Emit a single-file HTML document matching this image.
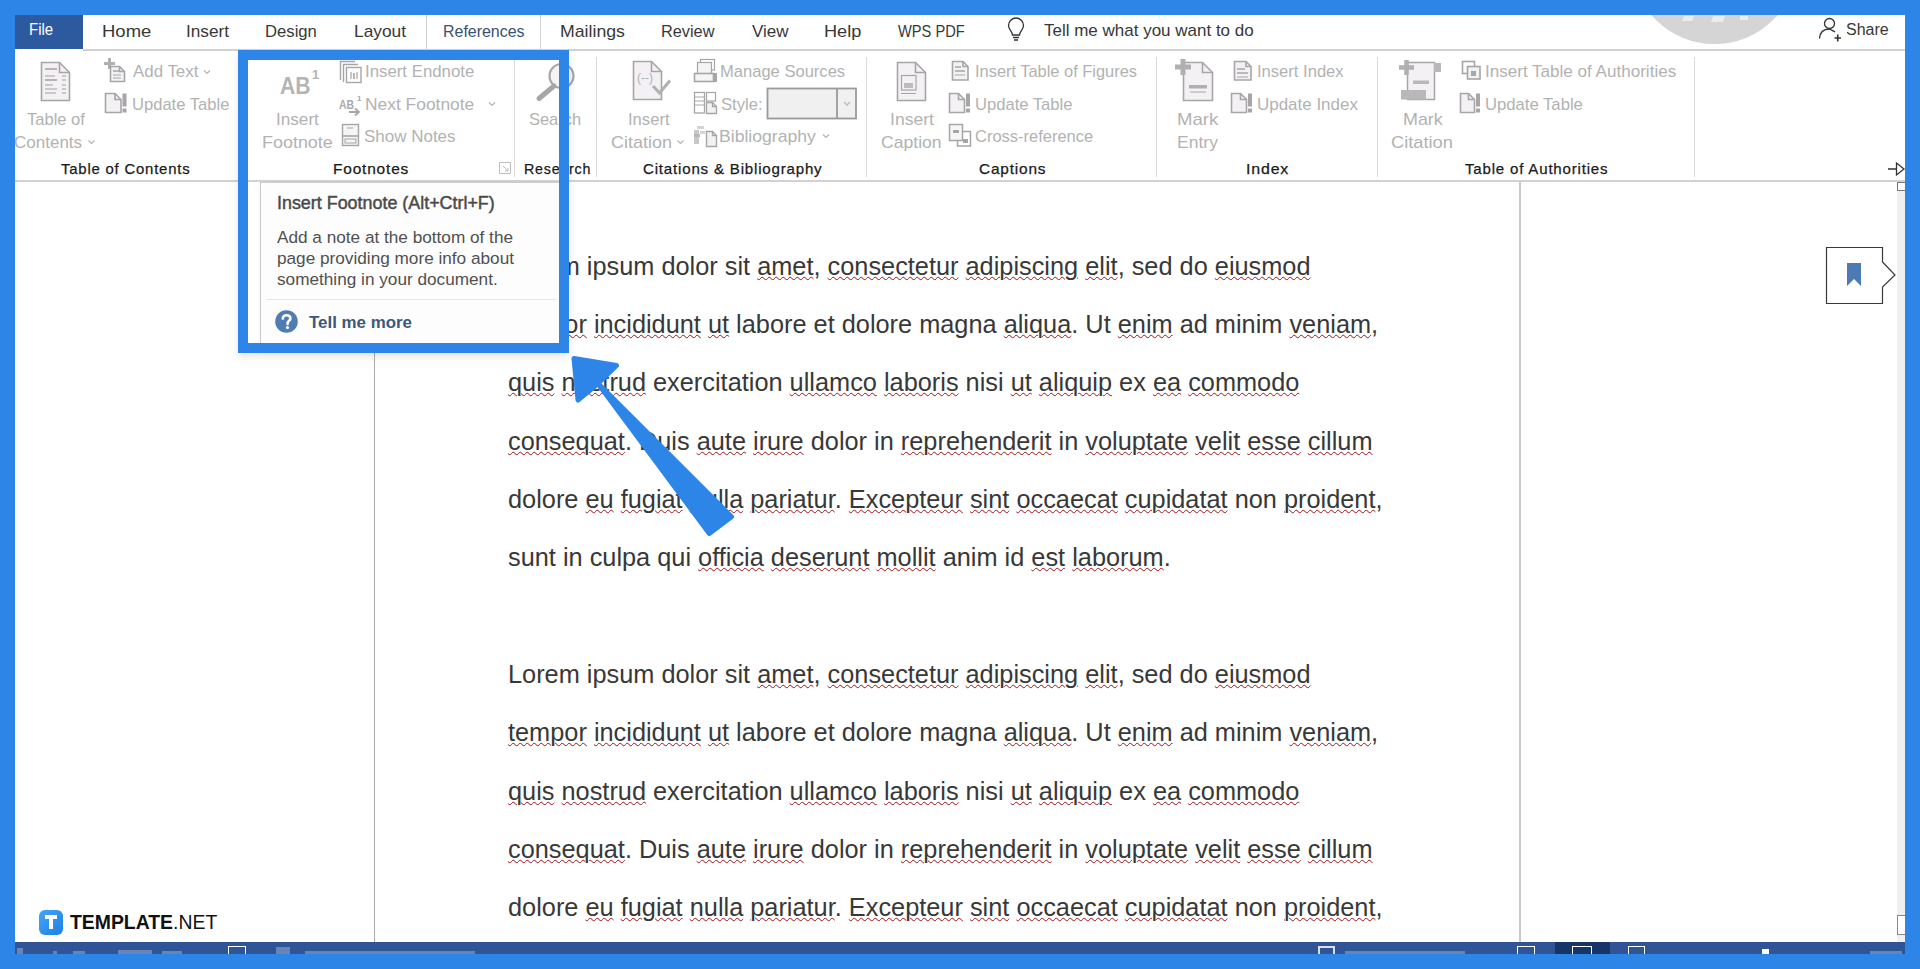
<!DOCTYPE html>
<html><head><meta charset="utf-8">
<style>
*{margin:0;padding:0;box-sizing:border-box}
html,body{width:1920px;height:969px;overflow:hidden;background:#fff;font-family:"Liberation Sans",sans-serif;position:relative}
.a{position:absolute;white-space:nowrap}
.tab{position:absolute;top:22px;font-size:17px;color:#383838;line-height:20px;white-space:nowrap}
.rt{position:absolute;font-size:16.2px;color:#b2b2b2;line-height:18px;letter-spacing:0px;white-space:nowrap}
.gl{position:absolute;top:160px;font-size:15px;color:#1a1a1a;-webkit-text-stroke:0.25px #1a1a1a;line-height:18px;letter-spacing:0.8px;white-space:nowrap}
.sep{position:absolute;top:57px;width:1px;height:120px;background:#dadada}
.doc{position:absolute;left:508px;font-size:25.33px;color:#383838;line-height:58.35px;white-space:nowrap}
.bb{position:absolute;background:#2d85e8;z-index:50}
svg{position:absolute;overflow:visible}
.doc{line-height:58.35px}
.doc u{text-decoration:underline wavy #9c1218;text-decoration-thickness:1.4px;text-underline-offset:0.5px}
</style></head><body>
<!-- tabs -->
<div class="a" style="left:15px;top:15px;width:68px;height:34px;background:#2d599f"></div>
<div class="tab" style="left:29px;top:19.6px;font-size:15.8px;color:#fff;transform:scaleX(0.95);transform-origin:0 0">File</div>
<div class="tab" style="left:101.7px;transform:scaleX(1.0872);transform-origin:0 0">Home</div>
<div class="tab" style="left:185.9px;transform:scaleX(1.0122);transform-origin:0 0">Insert</div>
<div class="tab" style="left:265.0px;transform:scaleX(0.9804);transform-origin:0 0">Design</div>
<div class="tab" style="left:353.9px;transform:scaleX(1.0200);transform-origin:0 0">Layout</div>
<div class="a" style="left:426px;top:15px;width:1px;height:35px;background:#d4d4d4"></div>
<div class="a" style="left:540px;top:15px;width:1px;height:35px;background:#d4d4d4"></div>
<div class="tab" style="left:442.7px;color:#3b5173;transform:scaleX(0.9382);transform-origin:0 0">References</div>
<div class="tab" style="left:560.3px;transform:scaleX(1.0410);transform-origin:0 0">Mailings</div>
<div class="tab" style="left:661.0px;transform:scaleX(0.9591);transform-origin:0 0">Review</div>
<div class="tab" style="left:752.0px;transform:scaleX(1.0000);transform-origin:0 0">View</div>
<div class="tab" style="left:823.7px;transform:scaleX(1.0682);transform-origin:0 0">Help</div>
<div class="tab" style="left:898.2px;top:20.5px;font-size:16.2px;transform:scaleX(0.905);transform-origin:0 0">WPS PDF</div>
<div class="tab" style="left:1044.2px;top:20.5px;transform:scaleX(0.9995);transform-origin:0 0">Tell me what you want to do</div>
<div class="tab" style="left:1845.6px;top:20px;font-size:16px;transform:scaleX(0.9976);transform-origin:0 0">Share</div>
<div class="a" style="left:83px;top:49px;width:1822px;height:2px;background:#d2d2d2"></div>
<!-- ribbon bottom -->
<div class="a" style="left:15px;top:180px;width:1890px;height:2px;background:#d2d2d2"></div>


<!--ICONS--><svg style="left:0;top:0;z-index:5" width="1920" height="969"><path d="M41.5 62.5 H59.5 L69.5 72.5 V100.5 H41.5 Z" fill="#f4f1f5" stroke="#a6a6a6" stroke-width="1.6" stroke-linejoin="miter"/><path d="M59.5 62.5 V72.5 H69.5" fill="none" stroke="#a6a6a6" stroke-width="1.6"/><path d="M45 69 L57 69" stroke="#a6a6a6" stroke-width="1.6" fill="none"/><path d="M45 76 L55 76" stroke="#a6a6a6" stroke-width="1.1" fill="none"/><path d="M62 76 L66 76" stroke="#a6a6a6" stroke-width="1.1" fill="none"/><path d="M45 80 L57 80" stroke="#a6a6a6" stroke-width="1.6" fill="none"/><path d="M62 80 L66 80" stroke="#a6a6a6" stroke-width="1.1" fill="none"/><path d="M45 85 L53 85" stroke="#a6a6a6" stroke-width="1.1" fill="none"/><path d="M62 85 L66 85" stroke="#a6a6a6" stroke-width="1.1" fill="none"/><path d="M45 89 L57 89" stroke="#a6a6a6" stroke-width="1.1" fill="none"/><path d="M62 89 L66 89" stroke="#a6a6a6" stroke-width="1.1" fill="none"/><path d="M45 93 L56 93" stroke="#a6a6a6" stroke-width="1.1" fill="none"/><path d="M62 93 L66 93" stroke="#a6a6a6" stroke-width="1.1" fill="none"/><rect x="104.0" y="62.0" width="11.0" height="3.0" fill="#b0b0b0"/><rect x="108.0" y="58.0" width="3.0" height="11.0" fill="#b0b0b0"/><path d="M110.5 66.5 H119.5 L124.5 71.5 V81.5 H110.5 Z" fill="#f4f1f5" stroke="#a6a6a6" stroke-width="1.6" stroke-linejoin="miter"/><path d="M119.5 66.5 V71.5 H124.5" fill="none" stroke="#a6a6a6" stroke-width="1.6"/><path d="M113 71 L119 71" stroke="#a6a6a6" stroke-width="1.5" fill="none"/><path d="M113 75 L121 75" stroke="#a6a6a6" stroke-width="1" fill="none"/><path d="M113 78 L121 78" stroke="#a6a6a6" stroke-width="1" fill="none"/><path d="M105.5 93.5 H115 L121 99.5 V112.5 H105.5 Z" fill="#f4f1f5" stroke="#a6a6a6" stroke-width="1.6" stroke-linejoin="miter"/><path d="M115 93.5 V99.5 H121" fill="none" stroke="#a6a6a6" stroke-width="1.6"/><rect x="122.5" y="93.5" width="4.0" height="13.0" fill="#a6a6a6"/><rect x="122.5" y="108.5" width="4.0" height="4.0" fill="#a6a6a6"/><text x="280" y="93.7" font-family="Liberation Sans" font-weight="bold" font-size="24.5" fill="#b4b4b4" textLength="30.5" lengthAdjust="spacingAndGlyphs">AB</text><text x="312" y="78.5" font-family="Liberation Sans" font-weight="bold" font-size="13" fill="#b4b4b4">1</text><path d="M340.5 80 V61.5 H355" fill="none" stroke="#a6a6a6" stroke-width="1.4"/><path d="M343.5 82 V64.5 H358" fill="none" stroke="#a6a6a6" stroke-width="1.4"/><rect x="346.5" y="67.5" width="14.5" height="15.0" fill="none" stroke="#a6a6a6" stroke-width="1.4"/><path d="M351 72 L351 79" stroke="#a6a6a6" stroke-width="1.2" fill="none"/><path d="M357 72 L357 79" stroke="#a6a6a6" stroke-width="1.2" fill="none"/><path d="M354 73 L354 79" stroke="#a6a6a6" stroke-width="1.6" fill="none"/><text x="339" y="109" font-family="Liberation Sans" font-weight="bold" font-size="13" fill="#aaaaaa" textLength="15" lengthAdjust="spacingAndGlyphs">AB</text><text x="357" y="101" font-family="Liberation Sans" font-weight="bold" font-size="8" fill="#a8a8a8">1</text><path d="M349 112 H358 M355 108.5 L359 112 L355 115.5" fill="none" stroke="#a6a6a6" stroke-width="1.8"/><rect x="342.5" y="124.5" width="16.0" height="21.0" fill="#f6f4f6" stroke="#a6a6a6" stroke-width="1.4"/><path d="M342.5 136 L358.5 136" stroke="#a6a6a6" stroke-width="1.6" fill="none"/><rect x="345" y="139" width="11" height="4" fill="none" stroke="#a6a6a6" stroke-width="1"/><path d="M347 128 L353 128" stroke="#a6a6a6" stroke-width="1" fill="none"/><circle cx="561.5" cy="76" r="12" fill="#f6f2f6" stroke="#a6a6a6" stroke-width="2.2"/><path d="M554 86 L539 98.5" stroke="#a6a6a6" stroke-width="5" stroke-linecap="round"/><path d="M633.5 61.5 H651.5 L661.5 71.5 V99.5 H633.5 Z" fill="#f4f1f5" stroke="#a6a6a6" stroke-width="1.6" stroke-linejoin="miter"/><path d="M651.5 61.5 V71.5 H661.5" fill="none" stroke="#a6a6a6" stroke-width="1.6"/><text x="637" y="82" font-family="Liberation Sans" font-size="12" fill="#b0b0b0">(--)</text><path d="M653 86 L659.5 93 L670 80.5" fill="none" stroke="#b0b0b0" stroke-width="3"/><rect x="700.5" y="59.5" width="14.0" height="10.5" fill="none" stroke="#a6a6a6" stroke-width="1.2"/><rect x="697.5" y="62.5" width="14.0" height="11.5" fill="#f4f4f4" stroke="#a6a6a6" stroke-width="1.2"/><rect x="694.5" y="73.5" width="19.0" height="8.0" fill="#f4f4f4" stroke="#a6a6a6" stroke-width="1.6"/><rect x="714" y="73" width="3" height="9" fill="#a6a6a6"/><rect x="694.5" y="92.5" width="10.0" height="20.5" fill="none" stroke="#a6a6a6" stroke-width="1.3"/><path d="M694.5 97 L704.5 97" stroke="#a6a6a6" stroke-width="1" fill="none"/><path d="M694.5 101 L704.5 101" stroke="#a6a6a6" stroke-width="1" fill="none"/><path d="M694.5 105 L704.5 105" stroke="#a6a6a6" stroke-width="1" fill="none"/><rect x="706.5" y="92.5" width="9.0" height="8.5" fill="none" stroke="#a6a6a6" stroke-width="1.2"/><path d="M706.5 102.5 H712.5 L716.5 106.5 V113.5 H706.5 Z" fill="#f4f1f5" stroke="#a6a6a6" stroke-width="1.3" stroke-linejoin="miter"/><path d="M712.5 102.5 V106.5 H716.5" fill="none" stroke="#a6a6a6" stroke-width="1.3"/><rect x="767.5" y="88.5" width="88.5" height="30.0" fill="#f0f0f0" stroke="#9a9a9a" stroke-width="1.8"/><path d="M837 89 L837 118" stroke="#9a9a9a" stroke-width="1.8" fill="none"/><path d="M844 102 L847 105 L850 102" fill="none" stroke="#b8b8b8" stroke-width="1.3"/><rect x="694" y="130" width="5" height="14" fill="#c8c8c8"/><rect x="697" y="126" width="7" height="3" fill="#d4d4d4"/><rect x="700" y="131" width="5" height="3" fill="#d4d4d4"/><rect x="694" y="134" width="6" height="3" fill="#b8b8b8"/><path d="M706.5 131.5 H712.5 L716.5 135.5 V146.5 H706.5 Z" fill="#f4f1f5" stroke="#a6a6a6" stroke-width="1.4" stroke-linejoin="miter"/><path d="M712.5 131.5 V135.5 H716.5" fill="none" stroke="#a6a6a6" stroke-width="1.4"/><path d="M897.5 62.5 H915.5 L925.5 72.5 V100.5 H897.5 Z" fill="#f4f1f5" stroke="#a6a6a6" stroke-width="1.6" stroke-linejoin="miter"/><path d="M915.5 62.5 V72.5 H925.5" fill="none" stroke="#a6a6a6" stroke-width="1.6"/><rect x="901.5" y="75.5" width="14.5" height="14.5" fill="none" stroke="#a6a6a6" stroke-width="1.2"/><rect x="904" y="83" width="9" height="5" fill="#bdbdbd"/><path d="M901 93.5 L916 93.5" stroke="#a6a6a6" stroke-width="1" fill="none"/><path d="M952.5 61.5 H963 L968 66.5 V80 H952.5 Z" fill="#f4f1f5" stroke="#a6a6a6" stroke-width="1.6" stroke-linejoin="miter"/><path d="M963 61.5 V66.5 H968" fill="none" stroke="#a6a6a6" stroke-width="1.6"/><path d="M955 67 L961 67" stroke="#a6a6a6" stroke-width="1.5" fill="none"/><path d="M955 71 L965 71" stroke="#a6a6a6" stroke-width="1.5" fill="none"/><path d="M955 75 L965 75" stroke="#a6a6a6" stroke-width="1" fill="none"/><path d="M949.5 93.5 H958.5 L964.5 99.5 V112.5 H949.5 Z" fill="#f4f1f5" stroke="#a6a6a6" stroke-width="1.6" stroke-linejoin="miter"/><path d="M958.5 93.5 V99.5 H964.5" fill="none" stroke="#a6a6a6" stroke-width="1.6"/><rect x="966.0" y="93.5" width="4.0" height="13.0" fill="#a6a6a6"/><rect x="966.0" y="108.5" width="4.0" height="4.0" fill="#a6a6a6"/><rect x="949.5" y="124.5" width="13.0" height="16.0" fill="#f6f6f6" stroke="#a6a6a6" stroke-width="1.5"/><rect x="953" y="130" width="6" height="3" fill="#a6a6a6"/><path d="M962.5 131.5 H970.5 V146 H957.5 V140.5" fill="none" stroke="#a6a6a6" stroke-width="1.5"/><rect x="963" y="139" width="5" height="4" fill="#a6a6a6"/><path d="M1183.5 62.5 H1202.5 L1212.5 72.5 V100.5 H1183.5 Z" fill="#f4f1f5" stroke="#a6a6a6" stroke-width="1.6" stroke-linejoin="miter"/><path d="M1202.5 62.5 V72.5 H1212.5" fill="none" stroke="#a6a6a6" stroke-width="1.6"/><rect x="1175" y="64.5" width="16" height="5.0" fill="#b0b0b0"/><rect x="1180.5" y="59" width="5.0" height="16" fill="#b0b0b0"/><rect x="1189" y="85" width="18" height="3.5" fill="#b0b0b0"/><path d="M1190 92 L1206 92" stroke="#a6a6a6" stroke-width="1" fill="none"/><path d="M1234.5 61.5 H1246 L1251 66.5 V80 H1234.5 Z" fill="#f4f1f5" stroke="#a6a6a6" stroke-width="1.6" stroke-linejoin="miter"/><path d="M1246 61.5 V66.5 H1251" fill="none" stroke="#a6a6a6" stroke-width="1.6"/><path d="M1237 69 L1245 69" stroke="#a6a6a6" stroke-width="1.5" fill="none"/><path d="M1237 73 L1248 73" stroke="#a6a6a6" stroke-width="1.5" fill="none"/><path d="M1237 77 L1248 77" stroke="#a6a6a6" stroke-width="1" fill="none"/><path d="M1231.5 93.5 H1240.5 L1246.5 99.5 V112.5 H1231.5 Z" fill="#f4f1f5" stroke="#a6a6a6" stroke-width="1.6" stroke-linejoin="miter"/><path d="M1240.5 93.5 V99.5 H1246.5" fill="none" stroke="#a6a6a6" stroke-width="1.6"/><rect x="1248.0" y="93.5" width="4.0" height="13.0" fill="#a6a6a6"/><rect x="1248.0" y="108.5" width="4.0" height="4.0" fill="#a6a6a6"/><path d="M1407.5 62.5 H1434.5 V99.5 H1407.5 Z" fill="#f4f1f5" stroke="#a6a6a6" stroke-width="1.5"/><rect x="1434" y="63" width="7" height="9" fill="#b8b8b8"/><rect x="1401" y="90" width="25" height="9.5" fill="#b8b8b8"/><rect x="1399.0" y="65.25" width="15.0" height="4.5" fill="#b0b0b0"/><rect x="1404.25" y="60.0" width="4.5" height="15.0" fill="#b0b0b0"/><rect x="1413" y="80.5" width="16" height="3.5" fill="#b8b8b8"/><rect x="1462.5" y="61.5" width="12.0" height="12.0" fill="none" stroke="#a6a6a6" stroke-width="1.6"/><rect x="1467.5" y="66.5" width="12.5" height="12.5" fill="#f2f2f2" stroke="#a6a6a6" stroke-width="1.6"/><rect x="1471" y="71" width="5" height="5" fill="#a6a6a6"/><path d="M1460.5 93.5 H1468.5 L1474.5 99.5 V112.5 H1460.5 Z" fill="#f4f1f5" stroke="#a6a6a6" stroke-width="1.6" stroke-linejoin="miter"/><path d="M1468.5 93.5 V99.5 H1474.5" fill="none" stroke="#a6a6a6" stroke-width="1.6"/><rect x="1476.0" y="93.5" width="4.0" height="13.0" fill="#a6a6a6"/><rect x="1476.0" y="108.5" width="4.0" height="4.0" fill="#a6a6a6"/><path d="M88.5 140.5 L91.5 143.5 L94.5 140.5" fill="none" stroke="#b4b4b4" stroke-width="1.2"/><path d="M204 70.5 L207 73.5 L210 70.5" fill="none" stroke="#b4b4b4" stroke-width="1.2"/><path d="M489 102.5 L492 105.5 L495 102.5" fill="none" stroke="#b4b4b4" stroke-width="1.2"/><path d="M677.5 140.5 L680.5 143.5 L683.5 140.5" fill="none" stroke="#b4b4b4" stroke-width="1.2"/><path d="M823 134.5 L826 137.5 L829 134.5" fill="none" stroke="#b4b4b4" stroke-width="1.2"/><path d="M499.5 162.5 H510.5 V173.5 H499.5 Z M503 166 L508 171 M505 171 H508 V168" fill="none" stroke="#bdbdbd" stroke-width="1"/><path d="M1888 169 H1896 M1896.5 163 V175 L1904 169 Z" fill="none" stroke="#333" stroke-width="1.3"/><path d="M1008.5 25.5 A7.5 7.5 0 1 1 1023.5 25.5 C1023.5 29.5 1019.5 31.5 1019.5 35 H1012.5 C1012.5 31.5 1008.5 29.5 1008.5 25.5 Z" fill="none" stroke="#333" stroke-width="1.3"/><path d="M1013 37.5 H1019 M1014 40 H1018" stroke="#333" stroke-width="1.3"/><circle cx="1829.5" cy="23.5" r="5" fill="none" stroke="#333" stroke-width="1.3"/><path d="M1819.5 38.5 C1820 31.5 1823.5 29 1829.5 29 C1832 30.5 1833.5 31 1835 32" fill="none" stroke="#333" stroke-width="1.3"/><path d="M1834.5 38 H1841 M1837.75 34.5 V41.5" stroke="#333" stroke-width="1.6"/></svg><!--/ICONS-->
<!-- ribbon text -->
<div class="rt" style="left:27.0px;top:110px;transform:scaleX(1.0214);transform-origin:0 0">Table of</div>
<div class="rt" style="left:14.2px;top:133px;transform:scaleX(1.0508);transform-origin:0 0">Contents</div>
<div class="rt" style="left:133.4px;top:62px;transform:scaleX(1.0419);transform-origin:0 0">Add Text</div>
<div class="rt" style="left:132.4px;top:95px;transform:scaleX(1.0237);transform-origin:0 0">Update Table</div>
<div class="gl" style="left:60.6px;transform:scaleX(0.9930);transform-origin:0 0">Table of Contents</div>

<div class="rt" style="left:276.0px;top:110px;transform:scaleX(1.0590);transform-origin:0 0">Insert</div>
<div class="rt" style="left:261.5px;top:133px;transform:scaleX(1.1082);transform-origin:0 0">Footnote</div>
<div class="rt" style="left:365.1px;top:62px;transform:scaleX(1.0379);transform-origin:0 0">Insert Endnote</div>
<div class="rt" style="left:365.0px;top:95px;transform:scaleX(1.0747);transform-origin:0 0">Next Footnote</div>
<div class="rt" style="left:364.1px;top:127px;transform:scaleX(1.0488);transform-origin:0 0">Show Notes</div>
<div class="gl" style="left:333.3px;transform:scaleX(1.0299);transform-origin:0 0">Footnotes</div>
<div class="sep" style="left:514px"></div>

<div class="rt" style="left:529.2px;top:110px;transform:scaleX(1.0163);transform-origin:0 0">Search</div>
<div class="gl" style="left:524.0px;transform:scaleX(0.9522);transform-origin:0 0">Research</div>
<div class="sep" style="left:596px"></div>

<div class="rt" style="left:627.7px;top:110px;transform:scaleX(1.0256);transform-origin:0 0">Insert</div>
<div class="rt" style="left:611.1px;top:133px;transform:scaleX(1.1115);transform-origin:0 0">Citation</div>
<div class="rt" style="left:719.6px;top:62px;transform:scaleX(1.0225);transform-origin:0 0">Manage Sources</div>
<div class="rt" style="left:720.6px;top:95px;transform:scaleX(1.0263);transform-origin:0 0">Style:</div>
<div class="rt" style="left:719.3px;top:127px;transform:scaleX(1.0862);transform-origin:0 0">Bibliography</div>
<div class="gl" style="left:643.4px;transform:scaleX(1.0056);transform-origin:0 0">Citations &amp; Bibliography</div>
<div class="sep" style="left:866px"></div>

<div class="rt" style="left:889.7px;top:110px;transform:scaleX(1.0868);transform-origin:0 0">Insert</div>
<div class="rt" style="left:880.8px;top:133px;transform:scaleX(1.0870);transform-origin:0 0">Caption</div>
<div class="rt" style="left:974.8px;top:62px;transform:scaleX(1.0133);transform-origin:0 0">Insert Table of Figures</div>
<div class="rt" style="left:974.8px;top:95px;transform:scaleX(1.0247);transform-origin:0 0">Update Table</div>
<div class="rt" style="left:974.8px;top:127px;transform:scaleX(1.0184);transform-origin:0 0">Cross-reference</div>
<div class="gl" style="left:979.4px;transform:scaleX(1.0270);transform-origin:0 0">Captions</div>
<div class="sep" style="left:1156px"></div>

<div class="rt" style="left:1176.5px;top:110px;transform:scaleX(1.1471);transform-origin:0 0">Mark</div>
<div class="rt" style="left:1176.6px;top:133px;transform:scaleX(1.0833);transform-origin:0 0">Entry</div>
<div class="rt" style="left:1256.6px;top:62px;transform:scaleX(1.0241);transform-origin:0 0">Insert Index</div>
<div class="rt" style="left:1256.5px;top:95px;transform:scaleX(1.0479);transform-origin:0 0">Update Index</div>
<div class="gl" style="left:1245.6px;transform:scaleX(1.0605);transform-origin:0 0">Index</div>
<div class="sep" style="left:1377px"></div>

<div class="rt" style="left:1402.6px;top:110px;transform:scaleX(1.1059);transform-origin:0 0">Mark</div>
<div class="rt" style="left:1391.1px;top:133px;transform:scaleX(1.1269);transform-origin:0 0">Citation</div>
<div class="rt" style="left:1484.5px;top:62px;transform:scaleX(1.0536);transform-origin:0 0">Insert Table of Authorities</div>
<div class="rt" style="left:1484.5px;top:95px;transform:scaleX(1.0290);transform-origin:0 0">Update Table</div>
<div class="gl" style="left:1464.8px;transform:scaleX(1.0043);transform-origin:0 0">Table of Authorities</div>
<div class="sep" style="left:1694px"></div>


<!-- document -->
<div class="a" style="left:374px;top:182px;width:1px;height:760px;background:#ababab"></div>
<div class="a" style="left:1519px;top:182px;width:2px;height:760px;background:#c9c9c9"></div>
<div class="a" style="left:1897px;top:182px;width:8px;height:760px;background:#f0f0f0"></div>
<div class="doc" id="doc" style="top:236.5px">Lorem ipsum dolor sit <u>amet</u>, <u>consectetur</u> <u>adipiscing</u> <u>elit</u>, sed do <u>eiusmod</u><br><u>tempor</u> <u>incididunt</u> <u>ut</u> labore et dolore magna <u>aliqua</u>. Ut <u>enim</u> ad minim <u>veniam</u>,<br><u>quis</u> <u>nostrud</u> exercitation <u>ullamco</u> <u>laboris</u> nisi <u>ut</u> <u>aliquip</u> ex <u>ea</u> <u>commodo</u><br><u>consequat</u>. Duis <u>aute</u> <u>irure</u> dolor in <u>reprehenderit</u> in <u>voluptate</u> <u>velit</u> <u>esse</u> <u>cillum</u><br>dolore <u>eu</u> <u>fugiat</u> <u>nulla</u> <u>pariatur</u>. <u>Excepteur</u> <u>sint</u> <u>occaecat</u> <u>cupidatat</u> non <u>proident</u>,<br>sunt in culpa qui <u>officia</u> <u>deserunt</u> <u>mollit</u> anim id <u>est</u> <u>laborum</u>.<br>&nbsp;<br>Lorem ipsum dolor sit <u>amet</u>, <u>consectetur</u> <u>adipiscing</u> <u>elit</u>, sed do <u>eiusmod</u><br><u>tempor</u> <u>incididunt</u> <u>ut</u> labore et dolore magna <u>aliqua</u>. Ut <u>enim</u> ad minim <u>veniam</u>,<br><u>quis</u> <u>nostrud</u> exercitation <u>ullamco</u> <u>laboris</u> nisi <u>ut</u> <u>aliquip</u> ex <u>ea</u> <u>commodo</u><br><u>consequat</u>. Duis <u>aute</u> <u>irure</u> dolor in <u>reprehenderit</u> in <u>voluptate</u> <u>velit</u> <u>esse</u> <u>cillum</u><br>dolore <u>eu</u> <u>fugiat</u> <u>nulla</u> <u>pariatur</u>. <u>Excepteur</u> <u>sint</u> <u>occaecat</u> <u>cupidatat</u> non <u>proident</u>,</div>


<!-- tooltip -->
<div class="a" style="left:260px;top:182px;width:300px;height:165px;background:#fdfdfd;border:1px solid #cacaca;box-shadow:2px 3px 6px rgba(0,0,0,0.12)"></div>
<div class="a" style="left:277px;top:193.5px;font-size:17.9px;color:#4a4a4a;line-height:18px;-webkit-text-stroke:0.45px #4a4a4a">Insert Footnote (Alt+Ctrl+F)</div>
<div class="a" style="left:277px;top:227px;font-size:17.2px;color:#505050;line-height:21px">Add a note at the bottom of the<br>page providing more info about<br>something in your document.</div>
<div class="a" style="left:266px;top:299px;width:290px;height:1px;background:#e6e6e6"></div>
<svg style="left:275px;top:310px" width="23" height="23" viewBox="0 0 23 23"><circle cx="11.5" cy="11.5" r="11.3" fill="#4f7db3"/><path d="M7.8 8.6 C7.8 6.3 9.5 5.2 11.6 5.2 C13.8 5.2 15.4 6.5 15.4 8.4 C15.4 10.6 12.6 11 12.6 13.2 L12.6 14" stroke="#fff" stroke-width="2.6" fill="none" stroke-linecap="round"/><circle cx="12.5" cy="17.6" r="1.6" fill="#fff"/></svg>
<div class="a" style="left:309px;top:314px;font-size:16.9px;font-weight:bold;color:#3d5878;line-height:18px">Tell me more</div>

<!-- annotation box -->
<div class="a" style="left:238px;top:50px;width:331px;height:303px;border:10px solid #2d85e8;z-index:40;box-shadow:0 4px 8px rgba(0,0,0,0.10)"></div>
<svg style="left:0;top:0;z-index:41" width="1920" height="969"><polygon points="574,358.5 616.5,365.5 598,383.5 731.5,516.8 709.3,533.5 598,383.5 578,400" fill="#2d85e8" stroke="#2d85e8" stroke-width="5" stroke-linejoin="round"/></svg>

<!-- bookmark box -->
<svg style="left:1820px;top:240px" width="90" height="70" viewBox="1820 240 90 70"><path d="M1826.5 247.5 H1882.5 V262 L1895 275 L1882.5 287 V303.5 H1826.5 Z" fill="#fff" stroke="#3a3a3a" stroke-width="1.2"/><path d="M1847 263 H1861 V286 L1854 279 L1847 286 Z" fill="#4c7ab2"/></svg>

<!-- status bar -->
<div class="a" style="left:15px;top:942px;width:1890px;height:12px;background:#2f5597"></div>
<div class="a" style="left:1555px;top:942px;width:55px;height:12px;background:#163566"></div>
<div class="a" style="left:1897px;top:915px;width:8px;height:20px;border:1px solid #888;border-right:none;background:#fff"></div>


<!-- top circle -->
<div class="a" style="left:1631px;top:-123px;width:167px;height:167px;border-radius:50%;background:#d5d5d5;z-index:3"></div>
<div class="a" style="left:1683px;top:16px;width:10px;height:5px;background:#ececec;z-index:4;transform:skewX(-20deg)"></div>
<div class="a" style="left:1712px;top:16px;width:12px;height:6px;background:#ececec;z-index:4;transform:skewX(-20deg)"></div>
<div class="a" style="left:1740px;top:16px;width:8px;height:4px;background:#eee;z-index:4"></div>
<!-- scrollbar bits -->
<div class="a" style="left:1897px;top:182px;width:8px;height:9px;border:1px solid #777;border-right:none;background:#fff"></div>
<!-- status bar icons -->
<div class="a" style="left:17px;top:948px;width:6px;height:6px;background:rgba(255,255,255,0.28)"></div>
<div class="a" style="left:53px;top:951px;width:4px;height:4px;background:rgba(255,255,255,0.28)"></div>
<div class="a" style="left:73px;top:951px;width:12px;height:4px;background:rgba(255,255,255,0.28)"></div>
<div class="a" style="left:118px;top:950px;width:34px;height:4px;background:rgba(255,255,255,0.28)"></div>
<div class="a" style="left:162px;top:951px;width:20px;height:4px;background:rgba(255,255,255,0.28)"></div>
<div class="a" style="left:228px;top:946px;width:18px;height:8px;border:1.5px solid #fff;border-bottom:none"></div>
<div class="a" style="left:276px;top:947px;width:14px;height:7px;background:rgba(255,255,255,0.28)"></div>
<div class="a" style="left:305px;top:951px;width:170px;height:4px;background:rgba(255,255,255,0.28)"></div>
<div class="a" style="left:1318px;top:946px;width:17px;height:8px;border:2px solid #dde;border-bottom:none"></div>
<div class="a" style="left:1345px;top:951px;width:120px;height:4px;background:rgba(255,255,255,0.28)"></div>
<div class="a" style="left:1517px;top:946px;width:18px;height:8px;border:1.5px solid #fff;border-bottom:none"></div>
<div class="a" style="left:1572px;top:946px;width:20px;height:8px;border:1.5px solid #fff;border-bottom:none"></div>
<div class="a" style="left:1628px;top:946px;width:17px;height:8px;border:1.5px solid #fff;border-bottom:none"></div>
<div class="a" style="left:1762px;top:949px;width:7px;height:5px;background:#fff"></div>
<div class="a" style="left:1870px;top:951px;width:32px;height:4px;background:rgba(255,255,255,0.28)"></div>

<!-- logo -->
<div class="a" style="left:39px;top:910px;width:24px;height:25px;border-radius:6px;background:linear-gradient(135deg,#44a6f7,#1c7fe6)"></div>
<div class="a" style="left:45px;top:915px;width:12px;height:3.5px;background:#fff"></div>
<div class="a" style="left:49.2px;top:915px;width:3.6px;height:14px;background:#fff"></div>
<div class="a" style="left:70px;top:911px;font-size:19.4px;line-height:22px;color:#111"><b>TEMPLATE</b>.NET</div>

<!-- blue frame -->
<div class="bb" style="left:0;top:0;width:1920px;height:15px"></div>
<div class="bb" style="left:0;top:954px;width:1920px;height:15px"></div>
<div class="bb" style="left:0;top:0;width:15px;height:969px"></div>
<div class="bb" style="left:1905px;top:0;width:15px;height:969px"></div>
</body></html>
